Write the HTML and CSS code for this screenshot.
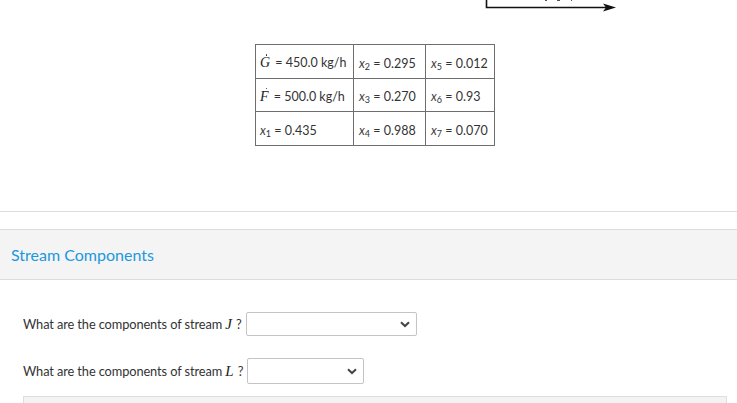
FILE: index.html
```html
<!DOCTYPE html>
<html>
<head>
<meta charset="utf-8">
<link rel="stylesheet" href="styles.css">
</head>
<body>
<div class="diagram">
  <svg width="737" height="12" viewBox="0 0 737 12">
    <path d="M486.5 0 V7.5 H606" stroke="#111" stroke-width="1.6" fill="none"/>
    <path d="M603 3.5 L616 7.5 L603 11.5 L606 7.5 Z" fill="#111"/>
    <path d="M545 0.5 h2 M557 0.5 h3 M571 0.5 h1" stroke="#555" stroke-width="1"/>
  </svg>
</div>

<table class="data">
  <tr>
    <td class="c1"><span class="dot">G</span> = 450.0 kg/h</td>
    <td class="c2"><i class="x">x</i><sub>2</sub> = 0.295</td>
    <td class="c3"><i class="x">x</i><sub>5</sub> = 0.012</td>
  </tr>
  <tr>
    <td class="c1"><span class="dot">F</span> = 500.0 kg/h</td>
    <td class="c2"><i class="x">x</i><sub>3</sub> = 0.270</td>
    <td class="c3"><i class="x">x</i><sub>6</sub> = 0.93</td>
  </tr>
  <tr>
    <td class="c1"><i class="x">x</i><sub>1</sub> = 0.435</td>
    <td class="c2"><i class="x">x</i><sub>4</sub> = 0.988</td>
    <td class="c3"><i class="x">x</i><sub>7</sub> = 0.070</td>
  </tr>
</table>

<div class="divider"></div>

<div class="section-head">Stream Components</div>

<div class="questions">
  <div class="q q1">
    <span class="label">What are the components of stream <i class="m">J</i> ?</span>
    <div class="select wide">
      <svg width="10" height="7" viewBox="0 0 10 7"><path d="M1 1.2 L5 5 L9 1.2" stroke="#444" stroke-width="2" fill="none"/></svg>
    </div>
  </div>
  <div class="q q2">
    <span class="label">What are the components of stream <i class="m">L</i> ?</span>
    <div class="select narrow">
      <svg width="10" height="7" viewBox="0 0 10 7"><path d="M1 1.2 L5 5 L9 1.2" stroke="#444" stroke-width="2" fill="none"/></svg>
    </div>
  </div>
  <div class="panel"></div>
</div>
</body>
</html>
```

FILE: styles.css
```css
html, body {
  margin: 0;
  padding: 0;
  background: #fff;
  overflow: hidden;
}
body {
  width: 737px;
  height: 403px;
  font-family: Lato, "Open Sans", sans-serif;
  color: #333;
}
.diagram {
  height: 12px;
  line-height: 0;
}
.diagram svg {
  display: block;
}
.data {
  border-collapse: collapse;
  margin: 32px 0 0 255px;
  font-size: 12.5px;
  color: #333;
}
.data td {
  border: 1px solid #6e6e6e;
  height: 32px;
  padding: 3px 0 0 4px;
  box-sizing: border-box;
  white-space: nowrap;
  vertical-align: middle;
}
.data .c1 { width: 98px; }
.data .c2 { width: 72px; padding-left: 5px; }
.data .c3 { width: 69px; padding-left: 5px; }
.data tr:nth-child(1) td { height: 34px; }
.data tr:nth-child(2) td { height: 33px; }
.data tr:nth-child(3) td { height: 34px; }
.x {
  font-style: italic;
  color: #444;
}
sub {
  font-size: 9px;
  vertical-align: -2px;
  line-height: 0;
}
.dot {
  position: relative;
  display: inline-block;
  font-family: "Liberation Serif", "DejaVu Serif", serif;
  font-style: italic;
  font-size: 14px;
  margin-right: 2px;
  color: #222;
}
.dot::before {
  content: "";
  position: absolute;
  left: 5.5px;
  top: -1px;
  width: 1.6px;
  height: 1.6px;
  border-radius: 50%;
  background: #222;
}
.divider {
  margin-top: 65px;
  height: 0;
  border-top: 1px solid #dcdcdc;
}
.section-head {
  margin-top: 17px;
  height: 49px;
  box-sizing: content-box;
  border-top: 1px solid #dcdcdc;
  border-bottom: 1px solid #dcdcdc;
  background: #f4f4f4;
  color: #1c98dd;
  font-size: 16px;
  display: flex;
  align-items: center;
  padding: 0 0 0 11px;
}
.questions {
  padding: 32px 0 0 23px;
}
.q {
  display: flex;
  align-items: center;
  font-size: 12.8px;
  letter-spacing: -0.1px;
}
.label {
  margin-right: 4px;
  white-space: nowrap;
}
.m {
  font-family: "Liberation Serif", "DejaVu Serif", serif;
  font-size: 15px;
  letter-spacing: 0;
  margin-right: 1px;
  color: #222;
}
.select {
  box-sizing: border-box;
  border: 1px solid #c4c4c4;
  border-radius: 2px;
  background: #fff;
  display: flex;
  align-items: center;
  justify-content: flex-end;
  padding-right: 6px;
}
.select svg {
  display: block;
}
.wide {
  width: 171px;
  height: 24px;
}
.narrow {
  width: 117px;
  height: 26px;
}
.q2 {
  margin-top: 22px;
}
.panel {
  margin-top: 12px;
  width: 704px;
  height: 20px;
  box-sizing: border-box;
  border: 1px solid #dedede;
  background: #f3f3f3;
}
```
